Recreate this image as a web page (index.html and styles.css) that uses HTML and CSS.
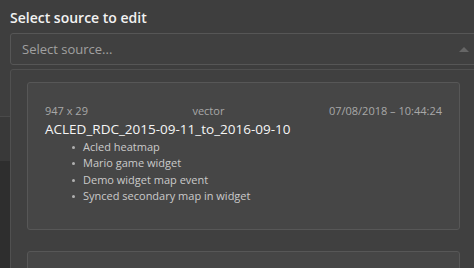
FILE: index.html
```html
<!DOCTYPE html>
<html>
<head>
<meta charset="utf-8">
<link rel="stylesheet" href="styles.css">
</head>
<body>
<div class="backdrop"></div>
<div class="modal">
  <h1 class="title">Select source to edit</h1>
  <div class="select">
    <span class="placeholder">Select source...</span>
    <span class="arrow"></span>
  </div>
  <div class="panel">
    <div class="card">
      <div class="meta">
        <span class="dims">947 x 29</span>
        <span class="type">vector</span>
        <span class="date">07/08/2018 – 10:44:24</span>
      </div>
      <div class="name">ACLED_RDC_2015-09-11_to_2016-09-10</div>
      <ul class="maps">
        <li>Acled heatmap</li>
        <li>Mario game widget</li>
        <li>Demo widget map event</li>
        <li>Synced secondary map in widget</li>
      </ul>
    </div>
    <div class="card"></div>
  </div>
</div>
</body>
</html>
```
FILE: styles.css
```css
html, body {
  margin: 0;
  padding: 0;
  width: 474px;
  height: 268px;
  overflow: hidden;
  background: #3e3e3e;
  font-family: "Open Sans", "Noto Sans", sans-serif;
}
.backdrop {
  position: absolute;
  left: 0;
  top: 116px;
  width: 10px;
  height: 152px;
  background: linear-gradient(#393939 0 44px, #2e2e2e 44px);
  border-top: 1px solid #4a4a4a;
}
.modal {
  position: relative;
  padding: 8px 0 0 10px;
}
.title {
  margin: 0;
  font-size: 14px;
  font-weight: 600;
  color: #f2f2f2;
  line-height: 20px;
}
.select {
  margin-top: 5px;
  width: 480px;
  height: 30px;
  border: 1px solid #565656;
  border-radius: 3px;
  background: #404040;
  display: flex;
  align-items: center;
}
.placeholder {
  margin-left: 11px;
  font-size: 13px;
  color: #a0a0a0;
}
.arrow {
  margin-left: 347px;
  width: 0;
  height: 0;
  border-left: 5px solid transparent;
  border-right: 5px solid transparent;
  border-bottom: 5px solid #666;
}
.panel {
  margin-top: 4px;
  width: 480px;
  height: 220px;
  border: 1px solid #505050;
  border-radius: 3px;
  background: #404040;
  padding: 12px 0 0 16px;
  display: flex;
  flex-direction: column;
  gap: 21px;
}
.card {
  width: 433px;
  min-height: 148px;
  border: 1px solid #575757;
  border-radius: 3px;
  background: #464646;
  padding: 20px 17px 0 17px;
  box-sizing: border-box;
  flex-shrink: 0;
}
.meta {
  display: flex;
  justify-content: space-between;
  font-size: 11px;
  color: #a8a8a8;
  line-height: 16px;
}
.name {
  font-size: 13.5px;
  color: #f5f5f5;
  line-height: 20px;
}
.maps {
  margin: 0;
  padding-left: 27px;
  list-style: none;
  font-size: 11px;
  color: #cacaca;
  line-height: 16.4px;
}
.maps li {
  display: flex;
  align-items: center;
}
.maps li::before {
  content: "";
  width: 3px;
  height: 3px;
  border-radius: 50%;
  background: #b0b0b0;
  margin-right: 8px;
  flex-shrink: 0;
}
```
